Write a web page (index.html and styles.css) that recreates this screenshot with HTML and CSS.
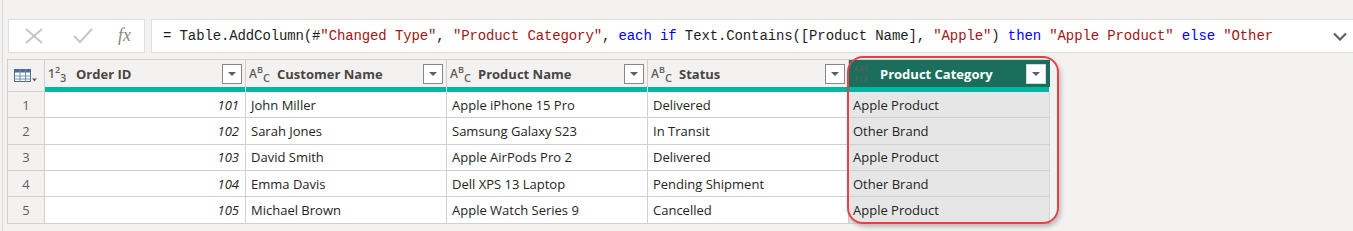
FILE: index.html
```html
<!DOCTYPE html>
<html lang="en">
<head>
<meta charset="utf-8">
<title>Power Query – Add Column</title>
<link rel="stylesheet" href="styles.css">
</head>
<body>
<div class="app">
  <div class="formula-row">
    <div class="fx-box">
      <svg class="ico-x" width="18" height="16" viewBox="0 0 18 16"><path d="M1 1 L17 15 M17 1 L1 15" stroke="#c8c6c4" stroke-width="2" fill="none"/></svg>
      <svg class="ico-check" width="20" height="16" viewBox="0 0 20 16"><path d="M1 8 L7 14 L19 1" stroke="#c8c6c4" stroke-width="2" fill="none"/></svg>
      <span class="fx">fx</span>
    </div>
    <div class="formula-input">
      <div class="formula-text"><span>= Table.AddColumn(#</span><span class="str">"Changed Type"</span><span>, </span><span class="str">"Product Category"</span><span>, </span><span class="kw">each</span><span> </span><span class="kw">if</span><span> Text.Contains([Product Name], </span><span class="str">"Apple"</span><span>) </span><span class="kw">then</span><span> </span><span class="str">"Apple Product"</span><span> </span><span class="kw">else</span><span> </span><span class="str">"Other</span></div>
      <svg class="chev" width="14" height="9" viewBox="0 0 14 9"><path d="M1 1.5 L7 7.5 L13 1.5" stroke="#5f5e5d" stroke-width="2.2" fill="none"/></svg>
    </div>
  </div>

  <div class="table-wrap">
    <div class="grid">
      <div class="corner">
        <svg width="24" height="16" viewBox="0 0 24 16">
          <rect x="0.5" y="0.5" width="16" height="12" fill="#fff" stroke="#4f6d94"/>
          <rect x="0.5" y="0.5" width="16" height="3" fill="#4f6d94"/>
          <path d="M6 0.5 V12.5 M11.5 0.5 V12.5 M0.5 7 H16.5 M0.5 10 H16.5" stroke="#6f8cb3" stroke-width="1"/>
          <path d="M18 9.5 L23 9.5 L20.5 12.5 Z" fill="#605e5c"/>
        </svg>
      </div>

      <div class="hcell">
        <span class="ti"><span class="big">1</span><span class="sup">2</span><span class="sub">3</span></span>
        <span class="hname">Order ID</span>
        <span class="dd"></span>
      </div>
      <div class="hcell">
        <span class="ti"><span class="big">A</span><span class="sup">B</span><span class="sub">C</span></span>
        <span class="hname">Customer Name</span>
        <span class="dd"></span>
      </div>
      <div class="hcell">
        <span class="ti"><span class="big">A</span><span class="sup">B</span><span class="sub">C</span></span>
        <span class="hname">Product Name</span>
        <span class="dd"></span>
      </div>
      <div class="hcell">
        <span class="ti"><span class="big">A</span><span class="sup">B</span><span class="sub">C</span></span>
        <span class="hname">Status</span>
        <span class="dd"></span>
      </div>
      <div class="hcell sel">
        <span class="ti-any"><span>ABC</span><span>123</span></span>
        <span class="hname">Product Category</span>
        <span class="dd"></span>
      </div>

      <div class="bar"></div><div class="bar"></div><div class="bar"></div><div class="bar"></div><div class="bar"></div>

      <div class="rn">1</div><div class="c num">101</div><div class="c">John Miller</div><div class="c">Apple iPhone 15 Pro</div><div class="c">Delivered</div><div class="c pc">Apple Product</div>
      <div class="rn">2</div><div class="c num">102</div><div class="c">Sarah Jones</div><div class="c">Samsung Galaxy S23</div><div class="c">In Transit</div><div class="c pc">Other Brand</div>
      <div class="rn">3</div><div class="c num">103</div><div class="c">David Smith</div><div class="c">Apple AirPods Pro 2</div><div class="c">Delivered</div><div class="c pc">Apple Product</div>
      <div class="rn">4</div><div class="c num">104</div><div class="c">Emma Davis</div><div class="c">Dell XPS 13 Laptop</div><div class="c">Pending Shipment</div><div class="c pc">Other Brand</div>
      <div class="rn">5</div><div class="c num">105</div><div class="c">Michael Brown</div><div class="c">Apple Watch Series 9</div><div class="c">Cancelled</div><div class="c pc">Apple Product</div>
    </div>
    <div class="highlight"></div>
  </div>
</div>
</body>
</html>
```

FILE: styles.css
```css
* { box-sizing: border-box; }

html, body {
  margin: 0;
  padding: 0;
  background: #f3f2f1;
  overflow: hidden;
}

body {
  font-family: "Open Sans", "Noto Sans", sans-serif;
  color: #252423;
}

.app {
  margin-left: 2px;
  border-left: 1px solid #dcdad8;
  height: 231px;
  padding: 19px 0 0 4px;
}

/* ---------- formula bar ---------- */
.formula-row {
  display: flex;
  gap: 6px;
  height: 34px;
  margin-left: 1px;
}

.fx-box {
  width: 137px;
  flex: none;
  background: #fff;
  border: 1px solid #e1dfdd;
  display: flex;
  align-items: center;
  padding-left: 16px;
}

.ico-x { margin-right: 30px; }
.ico-check { margin-right: 25px; }

.fx {
  font-family: "Liberation Serif", "DejaVu Serif", serif;
  font-style: italic;
  font-size: 18px;
  color: #8a8886;
  line-height: 1;
  margin-top: -3px;
}

.formula-input {
  flex: 1;
  min-width: 0;
  background: #fff;
  border: 1px solid #e1dfdd;
  border-right: none;
  display: flex;
  align-items: center;
  padding-left: 11px;
  padding-right: 6px;
}

.formula-text {
  white-space: pre;
  font-family: "Liberation Mono", "DejaVu Sans Mono", monospace;
  font-size: 14px;
  letter-spacing: -0.12px;
  color: #1e1e1e;
  flex: none;
}

.formula-text .str { color: #a31515; }
.formula-text .kw { color: #0000ff; }

.chev { margin-left: auto; flex: none; }

/* ---------- table ---------- */
.table-wrap {
  position: relative;
  margin-top: 6px;
  width: 1043px;
}

.grid {
  display: grid;
  grid-template-columns: 37px repeat(5, 201px);
  grid-template-rows: 27px 5px repeat(5, 26.35px);
  border-left: 1px solid #d2d0ce;
  border-top: 1px solid #d2d0ce;
  width: 1043px;
}

.corner {
  grid-row: span 2;
  background: #f3f2f1;
  border-right: 1px solid #d2d0ce;
  border-bottom: 1px solid #d2d0ce;
  display: flex;
  align-items: center;
  padding-left: 6px;
  padding-top: 3px;
}

.hcell {
  background: #f3f2f1;
  border-right: 1px solid #d2d0ce;
  display: flex;
  align-items: center;
  padding-left: 3px;
  padding-right: 3px;
}

.hname {
  font-weight: 700;
  font-size: 13px;
  color: #484644;
  white-space: nowrap;
}

.ti {
  display: inline-block;
  width: 28px;
  flex: none;
  font-weight: 600;
  color: #605e5c;
  line-height: 14px;
  white-space: nowrap;
}

.ti .big { font-size: 12px; }

.ti .sup {
  font-size: 9px;
  vertical-align: 5px;
}

.ti .sub {
  font-size: 11px;
  vertical-align: -4px;
}

.ti-any {
  display: inline-flex;
  flex-direction: column;
  width: 28px;
  flex: none;
  font-size: 7px;
  line-height: 10px;
  color: rgba(190, 70, 70, 0.55);
  letter-spacing: 0.5px;
  padding-left: 2px;
}

.dd {
  margin-left: auto;
  width: 20px;
  height: 20px;
  flex: none;
  background: #fff;
  border: 1px solid #8a8886;
  display: flex;
  align-items: center;
  justify-content: center;
}

.dd::after {
  content: "";
  border-left: 4px solid transparent;
  border-right: 4px solid transparent;
  border-top: 4px solid #605e5c;
}

.hcell.sel {
  background: #1b6e5b;
  border-right-color: #1b6e5b;
}

.hcell.sel .hname { color: #fff; }
.hcell.sel .dd { border-color: #d8d8d8; }

.bar {
  background: #00b7a3;
  border-right: 1px solid #e6efee;
}

.rn {
  background: #f3f2f1;
  border-right: 1px solid #d2d0ce;
  border-bottom: 1px solid #d2d0ce;
  display: flex;
  align-items: center;
  justify-content: center;
  font-size: 13px;
  color: #605e5c;
}

.c {
  background: #fff;
  border-right: 1px solid #d2d0ce;
  border-bottom: 1px solid #d2d0ce;
  display: flex;
  align-items: center;
  padding-left: 5px;
  padding-right: 5px;
  font-size: 13px;
  color: #252423;
  white-space: nowrap;
}

.c.num {
  justify-content: flex-end;
  font-style: italic;
  padding-right: 6px;
}

.c.pc {
  background: #e6e6e6;
  border-bottom-color: #d0d0d0;
  border-right-color: #d6d6d6;
  padding-left: 4px;
}

.highlight {
  position: absolute;
  left: 840px;
  top: -3px;
  width: 212px;
  height: 168px;
  border: 2px solid #e8404a;
  border-radius: 16px;
  box-shadow: 2px 3px 4px rgba(0, 0, 0, 0.22);
  pointer-events: none;
}
```
